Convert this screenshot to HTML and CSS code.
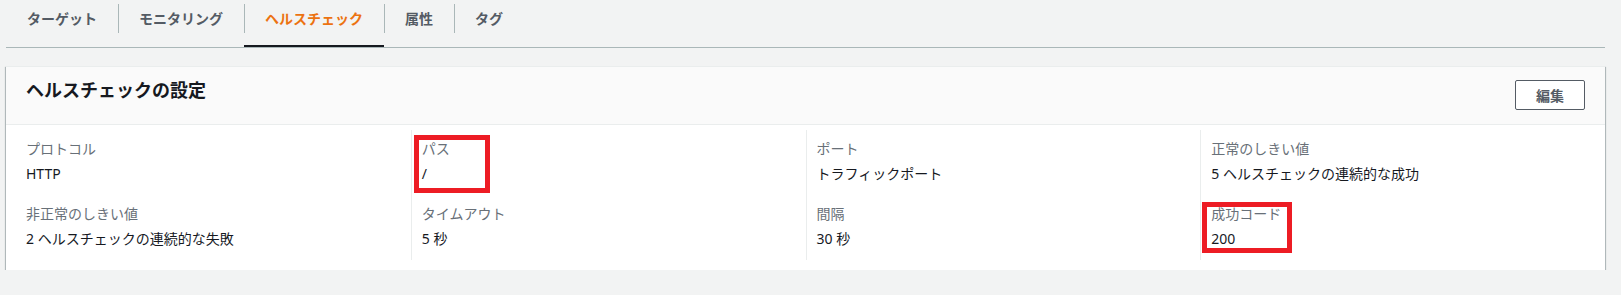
FILE: index.html
```html
<!DOCTYPE html>
<html lang="ja">
<head>
    <meta charset="UTF-8">
    <meta name="viewport" content="width=device-width, initial-scale=1.0">
    <title>ヘルスチェック</title>
    <link rel="stylesheet" href="styles.css">
</head>
<body>
    <div class="tabs">
        <div class="tab"><span class="tab-label">ターゲット</span></div>
        <div class="tab"><span class="tab-label">モニタリング</span></div>
        <div class="tab tab-active"><span class="tab-label">ヘルスチェック</span></div>
        <div class="tab"><span class="tab-label">属性</span></div>
        <div class="tab"><span class="tab-label">タグ</span></div>
    </div>

    <div class="panel">
        <div class="panel-header">
            <h2 class="panel-title">ヘルスチェックの設定</h2>
            <button class="btn-edit">編集</button>
        </div>
        <div class="panel-body">
            <div class="col">
                <div class="item">
                    <div class="item-label">プロトコル</div>
                    <div class="item-value">HTTP</div>
                </div>
                <div class="item">
                    <div class="item-label">非正常のしきい値</div>
                    <div class="item-value">2 ヘルスチェックの連続的な失敗</div>
                </div>
            </div>
            <div class="col">
                <div class="item">
                    <div class="item-label">パス</div>
                    <div class="item-value">/</div>
                    <div class="mark mark-path"></div>
                </div>
                <div class="item">
                    <div class="item-label">タイムアウト</div>
                    <div class="item-value">5 秒</div>
                </div>
            </div>
            <div class="col">
                <div class="item">
                    <div class="item-label">ポート</div>
                    <div class="item-value">トラフィックポート</div>
                </div>
                <div class="item">
                    <div class="item-label">間隔</div>
                    <div class="item-value">30 秒</div>
                </div>
            </div>
            <div class="col">
                <div class="item">
                    <div class="item-label">正常のしきい値</div>
                    <div class="item-value">5 ヘルスチェックの連続的な成功</div>
                </div>
                <div class="item">
                    <div class="item-label">成功コード</div>
                    <div class="item-value">200</div>
                    <div class="mark mark-code"></div>
                </div>
            </div>
        </div>
    </div>
</body>
</html>
```

FILE: styles.css
```css
body {
    margin: 0;
    padding: 0 16px 0 6px;
    background: #f2f3f3;
    font-family: 'Noto Sans', 'Noto Sans CJK JP', sans-serif;
    font-size: 14px;
    color: #16191f;
}
.tabs {
    display: flex;
    border-bottom: 1px solid #aab7b8;
    padding-left: 1px;
}
.tab {
    padding: 4px 0 12px;
    border-bottom: 2px solid transparent;
}
.tab-label {
    display: block;
    height: 29px;
    line-height: 29px;
    padding: 0 21px 0 20px;
    border-left: 1px solid #aab7b8;
    font-weight: bold;
    color: #545b64;
}
.tab:first-child .tab-label {
    border-left: none;
}
.tab-active {
    border-bottom-color: #16191f;
}
.tab-active .tab-label {
    color: #ec7211;
}
.panel {
    margin-top: 18px;
    background: #fff;
    border-top: 1px solid #eaeded;
    box-shadow: 0 1px 1px 0 rgba(0, 28, 36, 0.5), 1px 1px 1px 0 rgba(0, 28, 36, 0.2), -1px 1px 1px 0 rgba(0, 28, 36, 0.2);
}
.panel-header {
    display: flex;
    justify-content: space-between;
    align-items: flex-start;
    padding: 13px 20px 14px;
    background: #fafafa;
    border-bottom: 1px solid #eaeded;
}
.panel-title {
    margin: 0;
    font-size: 18px;
    line-height: 20px;
    font-weight: bold;
}
.btn-edit {
    width: 70px;
    height: 30px;
    padding: 0;
    background: #fff;
    border: 1px solid #545b64;
    border-radius: 2px;
    font-family: inherit;
    font-size: 14px;
    font-weight: bold;
    color: #545b64;
    cursor: pointer;
}
.panel-body {
    display: grid;
    grid-template-columns: repeat(4, 1fr);
    padding: 5px 10px 10px;
}
.col {
    padding: 8px 0 10px 10px;
    border-left: 1px solid #eaeded;
}
.col:first-child {
    border-left: none;
}
.item {
    position: relative;
    margin-bottom: 18px;
}
.item:last-child {
    margin-bottom: 0;
}
.item-label {
    line-height: 22px;
    color: #687078;
}
.item-value {
    margin-top: 3px;
    line-height: 22px;
}
.mark {
    position: absolute;
    box-sizing: border-box;
    border: 5px solid #ed1c24;
}
.mark-path {
    left: -8px;
    top: -3px;
    width: 76px;
    height: 58px;
}
.mark-code {
    left: -9px;
    top: -1px;
    width: 90px;
    height: 51px;
}
```
